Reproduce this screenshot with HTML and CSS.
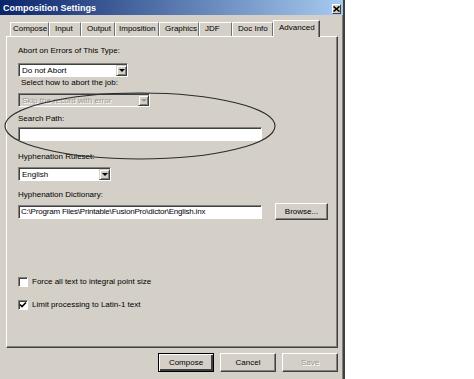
FILE: index.html
```html
<!DOCTYPE html>
<html lang="en">
<head>
  <meta charset="UTF-8">
  <title>Composition Settings</title>
  <link rel="stylesheet" href="styles.css">
</head>
<body>
 <div class="window">
   <div class="titlebar">
     <span class="title">Composition Settings</span>
     <span class="close">
       <svg width="7" height="6" viewBox="0 0 7 6"><path d="M0.5 0.5 L6.5 5.5 M6.5 0.5 L0.5 5.5" stroke="#000" stroke-width="1.6"/></svg>
     </span>
   </div>

   <div class="tabs">
     <div class="tab t-compose">Compose</div>
     <div class="tab t-input">Input</div>
     <div class="tab t-output">Output</div>
     <div class="tab t-imposition">Imposition</div>
     <div class="tab t-graphics">Graphics</div>
     <div class="tab t-jdf">JDF</div>
     <div class="tab t-docinfo">Doc Info</div>
     <div class="tab t-advanced active">Advanced</div>
   </div>

   <div class="panel">
     <div class="label l-abort">Abort on Errors of This Type:</div>
     <div class="select s-abort"><span class="val">Do not Abort</span><span class="arrow"><i></i></span></div>

     <div class="label l-how">Select how to abort the job:</div>
     <div class="select s-how disabled"><span class="val">Skip the record with error</span><span class="arrow"><i></i></span></div>

     <div class="label l-search">Search Path:</div>
     <div class="field f-search"></div>

     <div class="label l-rules">Hyphenation Ruleset:</div>
     <div class="select s-rules"><span class="val">English</span><span class="arrow"><i></i></span></div>

     <div class="label l-dict">Hyphenation Dictionary:</div>
     <div class="dictrow">
       <div class="field f-dict">C:\Program Files\Printable\FusionPro\dictor\English.inx</div>
       <div class="btn browse">Browse...</div>
     </div>

     <div class="check c-force"><span class="box"></span>Force all text to integral point size</div>
     <div class="check c-latin"><span class="box">
       <svg width="8" height="8" viewBox="0 0 8 8"><path d="M1 3.5 L3 5.5 L7 1.5" fill="none" stroke="#000" stroke-width="1.6"/></svg>
     </span>Limit processing to Latin-1 text</div>
   </div>

   <div class="actions">
     <div class="btn default">Compose</div>
     <div class="btn">Cancel</div>
     <div class="btn disabled">Save</div>
   </div>

   <!-- pen circle drawn over the dialog -->
   <svg class="mark" width="345" height="379" viewBox="0 0 345 379">
     <ellipse cx="140" cy="126" rx="135" ry="33" fill="none" stroke="#2b2b2b" stroke-width="1.1"/>
   </svg>
 </div>
</body>
</html>
```

FILE: styles.css
```css
*{
  box-sizing: border-box;
}
body{
  margin: 0;
  background: #fff;
  font-family: "Liberation Sans", Arial, sans-serif;
  font-size: 8px;
  color: #000;
}
.window{
  position: relative;
  width: 345px;
  height: 379px;
  background: #d4d0c8;
  border-right: 2px solid #404040;
  box-shadow: inset -1px 0 #808080;
}

/* title bar */
.titlebar{
  height: 15px;
  display: flex;
  align-items: center;
  justify-content: space-between;
  padding: 0 2px 0 3px;
  background: linear-gradient(to right, #0a246a, #a6caf0);
  color: #fff;
  font-weight: bold;
  font-size: 9px;
}
.close{
  width: 9px;
  height: 10px;
  margin-top: 2px;
  display: flex;
  align-items: center;
  justify-content: center;
  background: #d4d0c8;
  border: 1px solid;
  border-color: #fff #404040 #404040 #fff;
}

/* tabs */
.tabs{
  display: flex;
  align-items: flex-end;
  height: 16px;
  margin-top: 5px;
  padding-left: 10px;
}
.tab{
  height: 14px;
  line-height: 12px;
  padding-left: 3px;
  white-space: nowrap;
  border-left: 1px solid #fff;
  border-top: 1px solid #fff;
  border-right: 1px solid #707070;
}
.t-compose{ width: 39px; padding-left: 2px; }
.t-input{ width: 32px; padding-left: 5px; }
.t-output{ width: 34px; padding-left: 5px; }
.t-imposition{ width: 44px; }
.t-graphics{ width: 40px; padding-left: 5px; }
.t-jdf{ width: 33px; padding-left: 5px; }
.t-docinfo{ width: 41px; padding-left: 5px; }
.tab.active{
  position: relative;
  z-index: 1;
  width: 47px;
  height: 17px;
  margin-bottom: -1px;
  padding-left: 5px;
  line-height: 13px;
  background: #d4d0c8;
  border-right: 1px solid #404040;
  box-shadow: inset -1px 0 #808080;
}

/* panel */
.panel{
  width: 332px;
  height: 312px;
  margin-left: 6px;
  padding: 9px 0 0 11px;
  border: 1px solid;
  border-color: #fff #404040 #404040 #fff;
  box-shadow: inset -1px -1px #808080;
}
.label{
  line-height: 10px;
}
.l-abort{ margin-top: 0; }
.l-how{ margin-top: 1px; padding-left: 3px; }
.l-search{ margin-top: 7px; }
.l-rules{ margin-top: 11px; }
.l-dict{ margin-top: 9px; }

.select, .field{
  height: 14px;
  display: flex;
  align-items: center;
  padding-left: 3px;
  background: #fff;
  border: 1px solid;
  border-color: #808080 #fff #fff #808080;
  box-shadow: inset 1px 1px #404040;
  white-space: nowrap;
  overflow: hidden;
}
.select .val{
  flex: 1;
}
.select .arrow{
  width: 11px;
  height: 11px;
  display: flex;
  align-items: center;
  justify-content: center;
  background: #d4d0c8;
  border: 1px solid;
  border-color: #d4d0c8 #404040 #404040 #d4d0c8;
  box-shadow: inset 1px 1px #fff, inset -1px -1px #808080;
}
.select .arrow i{
  width: 0;
  height: 0;
  border-left: 3px solid transparent;
  border-right: 3px solid transparent;
  border-top: 3px solid #000;
}
.s-abort{ width: 110px; margin-top: 7px; }
.s-how{ width: 132px; margin-top: 5px; }
.s-rules{ width: 93px; margin-top: 5px; }
.select.disabled{
  background: #d4d0c8;
  color: #9a9890;
  text-shadow: 1px 1px #fff;
}
.select.disabled .arrow i{
  border-top-color: #9a9890;
}

.f-search{ width: 244px; margin-top: 3px; }
.dictrow{
  display: flex;
  align-items: center;
  height: 17px;
  margin-top: 3px;
}
.f-dict{
  width: 244px;
  padding-left: 2px;
  letter-spacing: -0.2px;
}

.btn{
  height: 19px;
  width: 56px;
  display: flex;
  align-items: center;
  justify-content: center;
  background: #d4d0c8;
  border: 1px solid;
  border-color: #fff #404040 #404040 #fff;
  box-shadow: inset -1px -1px #808080;
}
.browse{
  width: 53px;
  height: 17px;
  margin-left: 13px;
}
.btn.default{
  border-color: #000;
  box-shadow: inset 1px 1px #fff, inset -2px -2px #404040;
}
.btn.disabled{
  color: #9a9890;
  text-shadow: 1px 1px #fff;
}

.check{
  display: flex;
  align-items: center;
  height: 10px;
  line-height: 10px;
}
.check .box{
  width: 10px;
  height: 10px;
  margin-right: 4px;
  display: flex;
  align-items: center;
  justify-content: center;
  background: #fff;
  border: 1px solid;
  border-color: #808080 #fff #fff #808080;
  box-shadow: inset 1px 1px #404040;
}
.c-force{ margin-top: 57px; }
.c-latin{ margin-top: 13px; }

.actions{
  display: flex;
  justify-content: flex-end;
  gap: 6px;
  margin-top: 5px;
  padding-right: 5px;
}

.mark{
  position: absolute;
  top: 0;
  left: 0;
  pointer-events: none;
}
```
